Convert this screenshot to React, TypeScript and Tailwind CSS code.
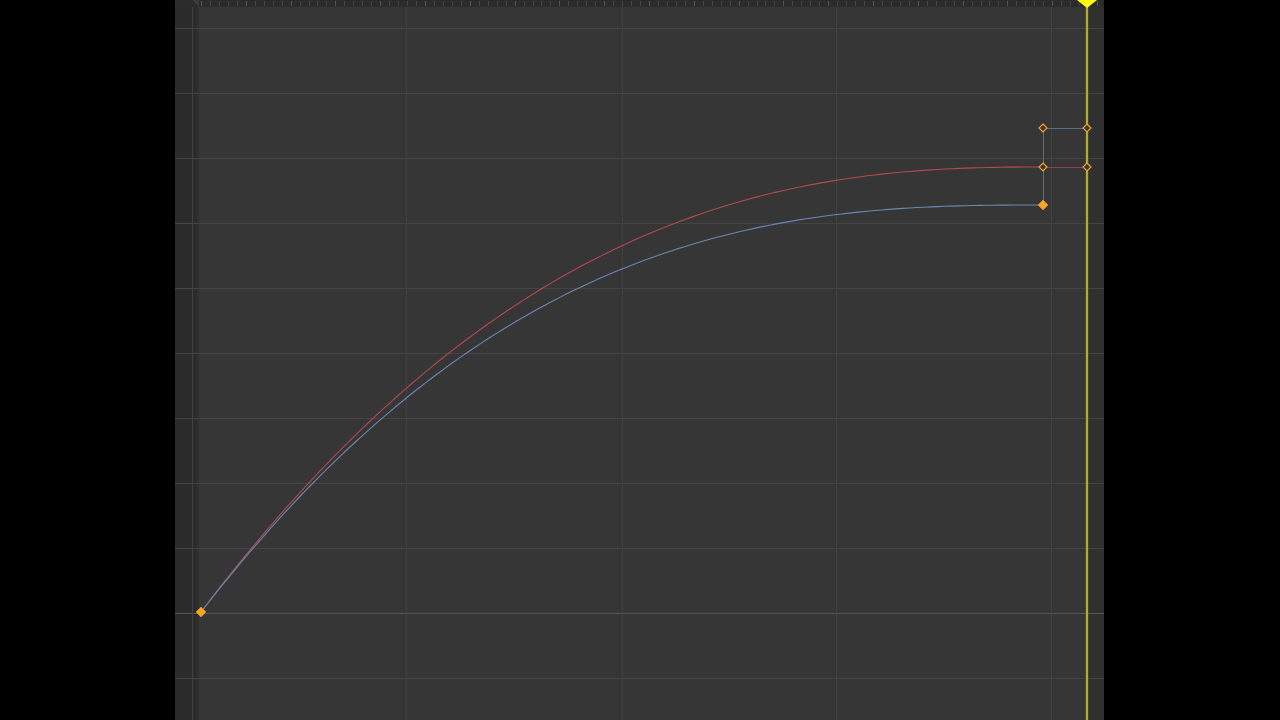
import React from "react";

const X0 = 201;
const X1 = 1043;

const curvePath = (yEnd: number, drop: number, power: number) => {
  const pts: string[] = [];
  for (let i = 0; i <= 120; i++) {
    const u = i / 120;
    const x = X0 + (X1 - X0) * u;
    const y = yEnd + drop * Math.pow(1 - u, power);
    pts.push(`${i === 0 ? "M" : "L"}${x.toFixed(2)} ${y.toFixed(2)}`);
  }
  return pts.join(" ");
};

const Diamond = ({ x, y, filled }: { x: number; y: number; filled?: boolean }) => {
  const r = filled ? 5 : 4;
  return (
    <polygon
      points={`${x},${y - r} ${x + r},${y} ${x},${y + r} ${x - r},${y}`}
      fill={filled ? "#f5a524" : "#3a3632"}
      stroke="#f0a12a"
      strokeWidth={filled ? 0.5 : 1.2}
    />
  );
};

const GraphEditor: React.FC = () => {
  const rows = Array.from({ length: 11 }, (_, i) => 28 + i * 65);
  const cols = [192, 406, 622, 836, 1051];
  const ticks = Array.from({ length: 101 }, (_, i) => 201 + i * 8.96).filter((x) => x < 1104);

  return (
    <div className="relative w-[929px] h-full bg-[#363636] flex flex-col overflow-hidden">
      <div className="h-[7px] bg-[#2c2c2c]" />
      <div className="flex-1 flex">
        <div className="w-[24px] bg-[#2b2b2b] border-r-2 border-[#303030]" />
        <div className="flex-1" />
        <div className="w-[16px] bg-[#303030]" />
      </div>

      <svg
        className="absolute inset-0"
        width={929}
        height={720}
        viewBox="175 0 929 720"
      >
        {/* ruler ticks */}
        <g shapeRendering="crispEdges">
          {ticks.map((x, i) => (
            <line
              key={`t-${i}`}
              x1={Math.round(x) + 0.5}
              x2={Math.round(x) + 0.5}
              y1={1}
              y2={6}
              stroke={i % 5 === 0 ? "#555555" : "#434343"}
            />
          ))}
          <polygon points="193,0 199,0 199,7" fill="#3a3a3a" />
        </g>

        {/* grid */}
        <g shapeRendering="crispEdges">
          {rows.map((y) => (
            <line
              key={`r-${y}`}
              x1={175}
              x2={1104}
              y1={y + 0.5}
              y2={y + 0.5}
              stroke={y === 613 ? "#565656" : "#444444"}
            />
          ))}
          {cols.map((x) => (
            <line
              key={`c-${x}`}
              x1={x + 0.5}
              x2={x + 0.5}
              y1={7}
              y2={720}
              stroke="#414141"
            />
          ))}
        </g>

        {/* handles */}
        <g shapeRendering="crispEdges">
          <line x1={1043.5} x2={1087} y1={128.5} y2={128.5} stroke="#5b6b8c" />
          <line x1={1043.5} x2={1043.5} y1={128} y2={205} stroke="#5b6b8c" />
          <line x1={1043} x2={1087} y1={167.5} y2={167.5} stroke="#8a4452" />
        </g>

        {/* curves */}
        <path d={curvePath(167, 445, 2.5)} fill="none" stroke="#b24a50" strokeWidth={1.1} />
        <path d={curvePath(205, 407, 2.67)} fill="none" stroke="#6b86b2" strokeWidth={1.1} />

        {/* current time */}
        <line x1={1087} x2={1087} y1={0} y2={720} stroke="#8f8c2c" strokeWidth={2.4} />
        <line x1={1087} x2={1087} y1={0} y2={720} stroke="#d6d23c" strokeWidth={0.9} />
        <polygon points="1077,0 1097,0 1087,8" fill="#ffff10" />

        {/* keys */}
        <Diamond x={201} y={612} filled />
        <Diamond x={1043} y={205} filled />
        <Diamond x={1043} y={128} />
        <Diamond x={1087} y={128} />
        <Diamond x={1043} y={167} />
        <Diamond x={1087} y={167} />
      </svg>
    </div>
  );
};

export default function App() {
  return (
    <div className="w-[1280px] h-[720px] bg-black flex">
      <div className="w-[175px]" />
      <GraphEditor />
      <div className="flex-1" />
    </div>
  );
}
